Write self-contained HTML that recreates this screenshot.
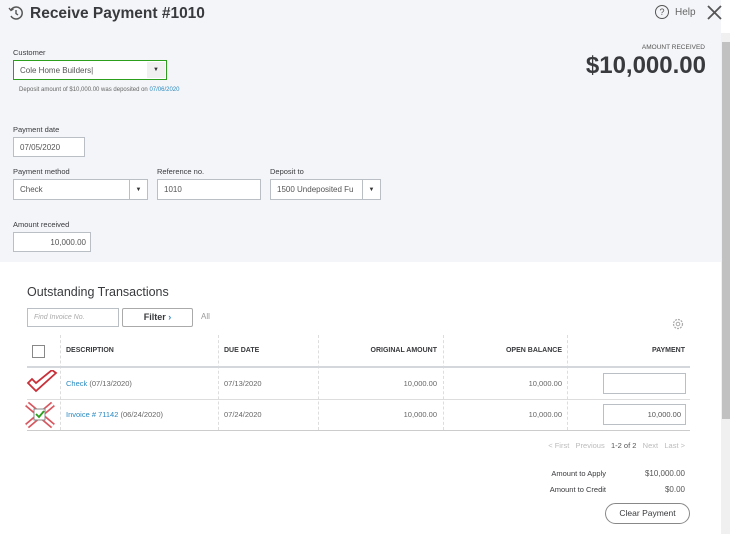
<!DOCTYPE html>
<html><head><style>
*{box-sizing:border-box;margin:0;padding:0}
body{width:730px;height:534px;overflow:hidden;font-family:"Liberation Sans",sans-serif;background:#fff;position:relative;color:#393a3d}
.a{position:absolute}
.top{left:0;top:0;width:721px;height:262px;background:#f4f5f8}
.lbl{font-size:7.5px;color:#393a3d}
.inp{background:#fff;border:1px solid #babec5;font-size:8px;color:#555;padding-left:6px;display:flex;align-items:center}
.dd{position:absolute;right:0;top:0;bottom:0;width:18px;border-left:1px solid #babec5;font-size:6px;display:flex;align-items:center;justify-content:center;color:#333}
.th{font-size:7px;font-weight:bold;color:#393a3d}
.td{font-size:7.5px;color:#666}
.lnk{color:#2a8ac1}
.vl{border-left:1px dashed #ddd}
</style></head><body>
<div class="a top"></div>
<svg class="a" style="left:8px;top:5px" width="16" height="16" viewBox="0 0 16 16"><path d="M3 5A6 6 0 1 1 3 11" fill="none" stroke="#555" stroke-width="1.5"/><path d="M8 5v3.5l2 1.5" fill="none" stroke="#555" stroke-width="1.4"/><path d="M1 3l2 2.5 2.5-1.5" fill="none" stroke="#555" stroke-width="1.3"/></svg>
<div class="a" style="left:30px;top:5px;font-size:15.5px;font-weight:bold;color:#393a3d">Receive Payment #1010</div>
<div class="a" style="left:655px;top:5px;width:14px;height:14px;border:1.3px solid #555;border-radius:50%;font-size:9px;text-align:center;line-height:12px;color:#555">?</div>
<div class="a" style="left:675px;top:7px;font-size:10px;color:#666">Help</div>
<svg class="a" style="left:707px;top:5px" width="15" height="15"><path d="M1 1L14 14M14 1L1 14" stroke="#555" stroke-width="1.8"/></svg>
<div class="a" style="left:721px;top:33px;width:9px;height:501px;background:#f0f0f0"></div>
<div class="a" style="left:722px;top:42px;width:8px;height:377px;background:#c1c1c1"></div>
<div class="a" style="left:600px;top:44px;width:105px;text-align:right;font-size:6.5px;color:#555">AMOUNT RECEIVED</div>
<div class="a" style="left:540px;top:52px;width:166px;text-align:right;font-size:24px;font-weight:bold;color:#393a3d">$10,000.00</div>

<div class="a lbl" style="left:13px;top:48px">Customer</div>
<div class="a inp" style="left:13px;top:60px;width:154px;height:20px;border:1px solid #2ca01c">Cole Home Builders|<div class="dd" style="border:none;background:#f0f0f0;top:1px;bottom:1px;right:1px">▼</div></div>
<div class="a" style="left:19px;top:87px;font-size:6px;color:#666">Deposit amount of $10,000.00 was deposited on <span class="lnk">07/06/2020</span></div>
<div class="a lbl" style="left:13px;top:125px">Payment date</div>
<div class="a inp" style="left:13px;top:137px;width:72px;height:20px">07/05/2020</div>
<div class="a lbl" style="left:13px;top:167px">Payment method</div>
<div class="a inp" style="left:13px;top:179px;width:135px;height:21px">Check<div class="dd">▼</div></div>
<div class="a lbl" style="left:157px;top:167px">Reference no.</div>
<div class="a inp" style="left:157px;top:179px;width:104px;height:21px">1010</div>
<div class="a lbl" style="left:270px;top:167px">Deposit to</div>
<div class="a inp" style="left:270px;top:179px;width:111px;height:21px">1500 Undeposited Fu<div class="dd">▼</div></div>
<div class="a lbl" style="left:13px;top:220px">Amount received</div>
<div class="a inp" style="left:13px;top:232px;width:78px;height:20px;justify-content:flex-end;padding-right:4px">10,000.00</div>

<div class="a" style="left:27px;top:285px;font-size:12.5px;color:#393a3d">Outstanding Transactions</div>
<div class="a inp" style="left:27px;top:308px;width:92px;height:19px;font-style:italic;font-size:7px;color:#aaa">Find Invoice No.</div>
<div class="a" style="left:122px;top:308px;width:71px;height:19px;border:1px solid #aaa;border-radius:2px;font-size:9px;font-weight:bold;text-align:center;line-height:17px;background:#fff">Filter <span style="color:#2a8ac1">›</span></div>
<div class="a" style="left:201px;top:312px;font-size:8px;color:#999">All</div>
<svg class="a" style="left:672px;top:318px" width="12" height="12" viewBox="0 0 12 12"><circle cx="6" cy="6" r="4.5" fill="none" stroke="#aaa" stroke-width="1.2" stroke-dasharray="2 1"/><circle cx="6" cy="6" r="1.8" fill="none" stroke="#aaa"/></svg>

<div class="a vl" style="left:60px;top:335px;height:95px"></div>
<div class="a vl" style="left:218px;top:335px;height:95px"></div>
<div class="a vl" style="left:318px;top:335px;height:95px"></div>
<div class="a vl" style="left:443px;top:335px;height:95px"></div>
<div class="a vl" style="left:567px;top:335px;height:95px"></div>
<div class="a" style="left:32px;top:345px;width:13px;height:13px;border:1px solid #888;background:#fff"></div>
<div class="a th" style="left:66px;top:347px">DESCRIPTION</div>
<div class="a th" style="left:224px;top:347px">DUE DATE</div>
<div class="a th" style="left:318px;top:347px;width:119px;text-align:right">ORIGINAL AMOUNT</div>
<div class="a th" style="left:443px;top:347px;width:119px;text-align:right">OPEN BALANCE</div>
<div class="a th" style="left:567px;top:347px;width:118px;text-align:right">PAYMENT</div>
<div class="a" style="left:27px;top:366px;width:663px;height:2px;background:#d4d7dc"></div>
<div class="a" style="left:27px;top:399px;width:663px;height:1px;background:#ddd"></div>
<div class="a" style="left:27px;top:430px;width:663px;height:1px;background:#ccc"></div>

<svg class="a" style="left:25px;top:370px" width="34" height="25"><path d="M3 13l8 8 20-18-4-3-16 13-4-4z" fill="none" stroke="#c9303a" stroke-width="1.8"/></svg>
<svg class="a" style="left:24px;top:401px" width="32" height="28"><path d="M3 3l26 22M29 3L3 25" stroke="#d23a44" stroke-width="6" opacity=".85"/><path d="M3 3l26 22M29 3L3 25" stroke="#fff" stroke-width="2.5"/><rect x="10" y="8" width="11" height="11" fill="#fff" stroke="#888"/><path d="M12 13l3 3 5-6" fill="none" stroke="#2ca01c" stroke-width="1.8"/></svg>

<div class="a td" style="left:66px;top:379px"><span class="lnk">Check</span> (07/13/2020)</div>
<div class="a td" style="left:224px;top:379px">07/13/2020</div>
<div class="a td" style="left:318px;top:379px;width:119px;text-align:right">10,000.00</div>
<div class="a td" style="left:443px;top:379px;width:119px;text-align:right">10,000.00</div>
<div class="a" style="left:603px;top:373px;width:83px;height:21px;border:1px solid #babec5"></div>
<div class="a td" style="left:66px;top:410px"><span class="lnk">Invoice # 71142</span> (06/24/2020)</div>
<div class="a td" style="left:224px;top:410px">07/24/2020</div>
<div class="a td" style="left:318px;top:410px;width:119px;text-align:right">10,000.00</div>
<div class="a td" style="left:443px;top:410px;width:119px;text-align:right">10,000.00</div>
<div class="a td" style="left:603px;top:404px;width:83px;height:21px;border:1px solid #babec5;text-align:right;padding:5px 4px 0 0;color:#555">10,000.00</div>

<div class="a" style="left:500px;top:441px;width:185px;text-align:right;font-size:7.5px;color:#bbb">&lt; First &nbsp; Previous &nbsp; <span style="color:#555">1-2 of 2</span> &nbsp; Next &nbsp; Last &gt;</div>
<div class="a" style="left:520px;top:469px;width:86px;text-align:right;font-size:7.5px;color:#393a3d">Amount to Apply</div>
<div class="a" style="left:620px;top:469px;width:65px;text-align:right;font-size:8px;color:#555">$10,000.00</div>
<div class="a" style="left:520px;top:485px;width:86px;text-align:right;font-size:7.5px;color:#393a3d">Amount to Credit</div>
<div class="a" style="left:620px;top:485px;width:65px;text-align:right;font-size:8px;color:#555">$0.00</div>
<div class="a" style="left:605px;top:503px;width:85px;height:21px;border:1px solid #888;border-radius:11px;text-align:center;line-height:19px;font-size:8.5px;color:#393a3d">Clear Payment</div>
</body></html>
